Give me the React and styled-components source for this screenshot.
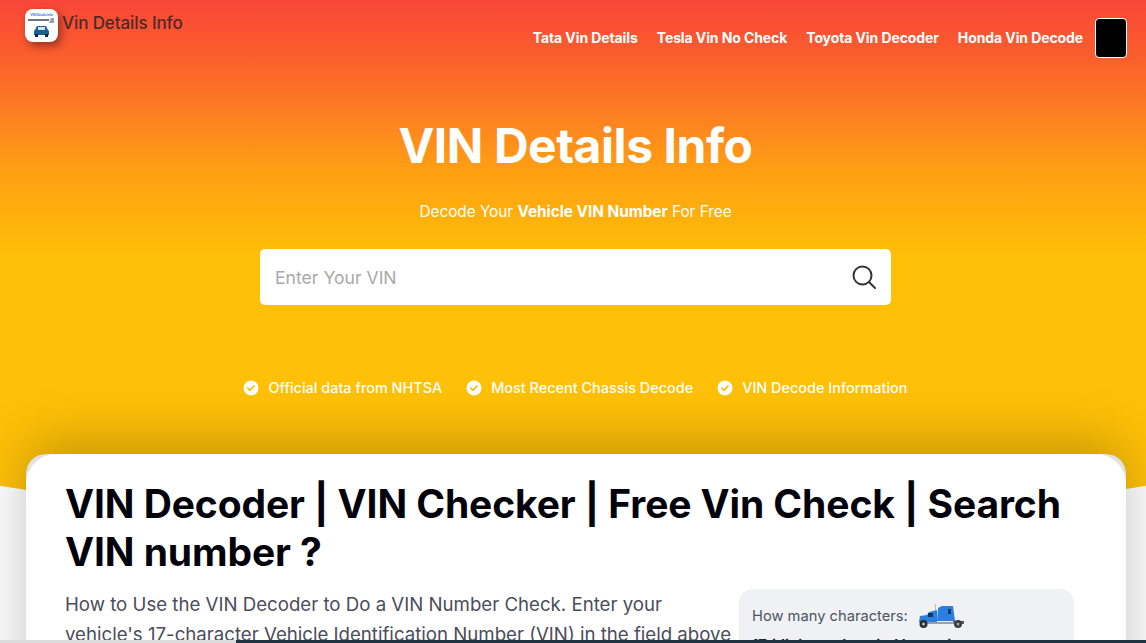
import React from "react";
import styled, { createGlobalStyle } from "styled-components";

const Global = createGlobalStyle`
  html, body { margin: 0; padding: 0; height: 100%; overflow: hidden; background: #fff; }
  body { font-family: Inter, "Open Sans", Arial, sans-serif; }
  #root { height: 100%; }
  * { box-sizing: border-box; }
`;

const Page = styled.div`
  position: relative;
  height: 643px;
  overflow: hidden;
  background: #fff;
`;

const Hero = styled.header`
  position: relative;
  height: 454px;
  background: linear-gradient(180deg, #f94638 0%, #fb5d2d 12%, #fd7f22 25%, #ffa012 38%, #ffc107 58%, #ffc107 100%);
  &::after {
    content: "";
    position: absolute;
    left: -127px;
    width: 1400px;
    top: 355px;
    height: 166px;
    border-radius: 50%;
    background: #ffc107;
  }
`;

const HeroInner = styled.div`
  position: relative;
  z-index: 1;
  display: flex;
  flex-direction: column;
  align-items: center;
  padding-left: 5px;
`;

const TopBar = styled.nav`
  align-self: stretch;
  margin-left: -5px;
  height: 116px;
  display: flex;
  justify-content: space-between;
  align-items: flex-start;
  padding: 9px 19px 0 25px;
`;

const Brand = styled.a`
  display: flex;
  align-items: flex-start;
  gap: 4px;
  font-size: 17px;
  font-weight: 500;
  line-height: 28px;
  color: #4b2a28;
  letter-spacing: -0.1px;
`;

const LogoTile = styled.div`
  width: 33px;
  height: 33px;
  border-radius: 8px;
  background: #fff;
  box-shadow: 3px 4px 9px rgba(0, 0, 0, 0.4);
  overflow: hidden;
  display: flex;
  flex-direction: column;
  align-items: center;
  padding-top: 4px;
`;

const LogoText = styled.span`
  font-size: 3.2px;
  line-height: 5px;
  font-weight: 700;
  color: #2e86d8;
  white-space: nowrap;
`;

const NavLinks = styled.div`
  display: flex;
  align-items: center;
  gap: 19px;
  padding-top: 9px;
`;

const NavLink = styled.a`
  font-size: 14px;
  font-weight: 700;
  line-height: 39px;
  padding-bottom: 1px;
  color: #fff;
  letter-spacing: -0.1px;
  white-space: nowrap;
`;

const MenuButton = styled.button`
  width: 32px;
  height: 40px;
  margin-left: -7px;
  background: #000;
  border: 1px solid #fff;
  border-radius: 4px;
  padding: 0;
`;

const Title = styled.h2`
  margin: 0;
  font-size: 48px;
  line-height: 60px;
  font-weight: 700;
  color: #fff;
  letter-spacing: -0.45px;
`;

const Subtitle = styled.p`
  margin: 25px 0 0;
  font-size: 15.3px;
  line-height: 22px;
  color: #fff;
  b { font-weight: 700; }
`;

const SearchBox = styled.div`
  margin-top: 26px;
  width: 631px;
  height: 56px;
  background: #fff;
  border-radius: 5px;
  display: flex;
  align-items: center;
  justify-content: space-between;
  padding: 0 14px 0 15px;
`;

const Placeholder = styled.span`
  font-size: 17.6px;
  color: #a9a9a9;
`;

const Features = styled.ul`
  list-style: none;
  margin: 72px 0 0;
  padding: 0;
  display: flex;
  gap: 24px;
`;

const Feature = styled.li`
  display: flex;
  align-items: center;
  gap: 9px;
  font-size: 14.45px;
  line-height: 22px;
  font-weight: 500;
  color: #fff;
`;

const Card = styled.section`
  position: relative;
  z-index: 2;
  margin: 0 20px 0 26px;
  border-radius: 20px;
  background: #dfe2e4;
  box-shadow: 0 -12px 55px rgba(0, 0, 0, 0.24);
`;

const CardInner = styled.div`
  background: #fff;
  border-radius: 30px 30px 0 0;
  padding: 26px 39px 40px;
`;

const Heading = styled.h1`
  margin: 0;
  font-size: 39px;
  line-height: 48px;
  font-weight: 700;
  color: #02030a;
  letter-spacing: -0.1px;
`;

const Columns = styled.div`
  display: grid;
  grid-template-columns: 674px 335px;
  margin-top: 13px;
`;

const Lead = styled.p`
  margin: 0;
  font-size: 18.65px;
  line-height: 30px;
  color: #4b4d5a;
`;

const InfoBox = styled.aside`
  background: #f0f1f5;
  border-radius: 14px;
  padding: 13px 13px;
  height: 200px;
`;

const InfoLabel = styled.div`
  display: flex;
  align-items: center;
  gap: 9px;
  height: 28px;
  font-size: 14.7px;
  color: #4b5560;
`;

const InfoValue = styled.div`
  margin-top: 6px;
  font-size: 14.7px;
  font-weight: 700;
  color: #1c2430;
`;

const BottomBar = styled.div`
  position: absolute;
  left: 0;
  right: 0;
  bottom: 0;
  height: 3px;
  z-index: 5;
  display: flex;
`;

const BarGhost = styled.div`
  width: 236px;
  background: #dcdcdc;
`;

const BarDark = styled.div`
  flex: 1;
  background: #1e3442;
`;

const SearchIcon = () => (
  <svg width="26" height="26" viewBox="0 0 26 26" fill="none" stroke="#333" strokeWidth="2" strokeLinecap="round">
    <circle cx="11.5" cy="11.5" r="9" />
    <path d="M18 18l6 6" />
  </svg>
);

const CheckIcon = () => (
  <svg width="16" height="16" viewBox="0 0 16 16">
    <circle cx="8" cy="8" r="7.5" fill="#fff" />
    <path d="M4.8 8.2l2.2 2.2 4-4.4" fill="none" stroke="#ffc107" strokeWidth="1.7" strokeLinecap="round" strokeLinejoin="round" />
  </svg>
);

const LogoArt = () => (
  <svg width="27" height="20" viewBox="0 0 27 20">
    <rect x="0" y="1" width="21" height="2" fill="#6b7280" />
    <path d="M23 0h3v5h-5z" fill="#9aa3ad" />
    <path d="M7 12l2-4h9l2 4 1 1v4H6v-4z" fill="#1f5f8f" />
    <rect x="10" y="9" width="7" height="3" fill="#cfe3f2" />
    <rect x="7" y="16" width="3" height="3" fill="#0e2a40" />
    <rect x="17" y="16" width="3" height="3" fill="#0e2a40" />
  </svg>
);

const Truck = () => (
  <svg width="47" height="26" viewBox="0 0 47 26">
    <rect x="18" y="1" width="1" height="18" fill="#b9bcc2" />
    <path d="M21 5l4-2h11l2 15H20z" fill="#2a7fe0" />
    <rect x="31" y="6" width="3" height="5" fill="#14375f" />
    <path d="M3 13l7-1 2-3 8-2v12H2z" fill="#2a7fe0" />
    <rect x="11" y="10" width="5" height="4" fill="#16355a" />
    <rect x="36" y="18" width="11" height="3" fill="#55585e" />
    <rect x="8" y="19" width="30" height="2" fill="#9a9ea6" />
    <circle cx="6.5" cy="21" r="4" fill="#2c2e33" />
    <circle cx="6.5" cy="21" r="1.5" fill="#b8bbc2" />
    <circle cx="41" cy="21" r="4" fill="#3a3c41" />
    <circle cx="41" cy="21" r="1.5" fill="#9a9ea6" />
  </svg>
);

const links = ["Tata Vin Details", "Tesla Vin No Check", "Toyota Vin Decoder", "Honda Vin Decode"];
const features = ["Official data from NHTSA", "Most Recent Chassis Decode", "VIN Decode Information"];

export default function App() {
  return (
    <Page>
      <Global />
      <Hero>
        <HeroInner>
          <TopBar>
            <Brand>
              <LogoTile>
                <LogoText>VIN Details Info</LogoText>
                <LogoArt />
              </LogoTile>
              Vin Details Info
            </Brand>
            <NavLinks>
              {links.map((l) => (
                <NavLink key={l}>{l}</NavLink>
              ))}
              <MenuButton aria-label="menu" />
            </NavLinks>
          </TopBar>
          <Title>VIN Details Info</Title>
          <Subtitle>
            Decode Your <b>Vehicle VIN Number</b> For Free
          </Subtitle>
          <SearchBox>
            <Placeholder>Enter Your VIN</Placeholder>
            <SearchIcon />
          </SearchBox>
          <Features>
            {features.map((f) => (
              <Feature key={f}>
                <CheckIcon />
                {f}
              </Feature>
            ))}
          </Features>
        </HeroInner>
      </Hero>
      <Card>
        <CardInner>
          <Heading>VIN Decoder | VIN Checker | Free Vin Check | Search VIN number ?</Heading>
          <Columns>
            <Lead>
              How to Use the VIN Decoder to Do a VIN Number Check. Enter your vehicle's 17-character Vehicle
              Identification Number (VIN) in the field above and click the search icon.
            </Lead>
            <InfoBox>
              <InfoLabel>
                How many characters:
                <Truck />
              </InfoLabel>
              <InfoValue>17 (digits and capital letters)</InfoValue>
            </InfoBox>
          </Columns>
        </CardInner>
      </Card>
      <BottomBar>
        <BarGhost />
        <BarDark />
      </BottomBar>
    </Page>
  );
}
